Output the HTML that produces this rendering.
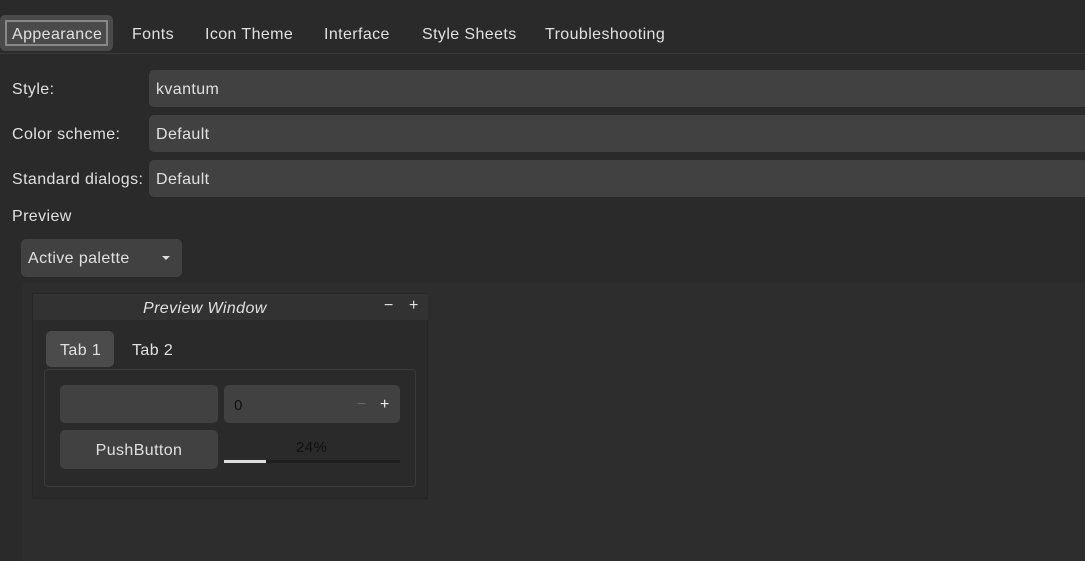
<!DOCTYPE html><html><head><style>
body{margin:0;width:1085px;height:561px;background:#2a2a2a;font-family:"Liberation Sans",sans-serif;color:#e0e0e0;font-size:16px;letter-spacing:0.4px;position:relative;overflow:hidden}
div{position:absolute;box-sizing:border-box}
.in{background:#414141;border-radius:5px;height:37px;left:149px;width:940px;padding:11px 7px}
.l{left:12px}
</style></head><body>
<div style="left:0;top:15px;width:113px;height:36px;background:#4a4a4a;border-radius:5px"></div>
<div style="left:5px;top:20px;width:103px;height:26px;border:2px solid #888"></div>
<div style="left:12px;top:26px">Appearance</div>
<div style="left:132px;top:26px">Fonts</div>
<div style="left:205px;top:26px">Icon Theme</div>
<div style="left:324px;top:26px">Interface</div>
<div style="left:422px;top:26px">Style Sheets</div>
<div style="left:545px;top:26px">Troubleshooting</div>
<div style="left:0;top:53px;width:1085px;height:1px;background:#3a3a3a"></div>
<div class="l" style="top:81px">Style:</div><div class="in" style="top:70px">kvantum</div>
<div class="l" style="top:126px">Color scheme:</div><div class="in" style="top:115px">Default</div>
<div class="l" style="top:171px">Standard dialogs:</div><div class="in" style="top:160px">Default</div>
<div class="l" style="top:208px">Preview</div>
<div style="left:21px;top:239px;width:161px;height:38px;background:#414141;border-radius:5px;padding:11px 7px">Active palette</div>
<div style="left:162px;top:256px;width:0;height:0;border-left:4px solid transparent;border-right:4px solid transparent;border-top:4px solid #ddd"></div>
<div style="left:22px;top:282px;width:1063px;height:279px;background:#2d2d2d"></div>
<div style="left:32px;top:293px;width:396px;height:206px;background:#2a2a2a;border:1px solid #262626"></div>
<div style="left:33px;top:294px;width:395px;height:26px;background:#323232"></div>
<div style="left:143px;top:300px;font-style:italic">Preview Window</div>
<div style="left:384px;top:297px">−</div><div style="left:409px;top:297px">+</div>
<div style="left:46px;top:331px;width:68px;height:36px;background:#4b4b4b;border-radius:5px"></div>
<div style="left:60px;top:342px">Tab 1</div><div style="left:132px;top:342px">Tab 2</div>
<div style="left:44px;top:369px;width:372px;height:118px;border:1px solid #3a3a3a;border-radius:4px"></div>
<div style="left:60px;top:385px;width:158px;height:38px;background:#414141;border-radius:5px"></div>
<div style="left:224px;top:385px;width:176px;height:38px;background:#414141;border-radius:5px"></div>
<div style="left:234px;top:397px;color:#111;font-size:15px">0</div>
<div style="left:357px;top:396px;color:#666">−</div><div style="left:380px;top:396px;color:#eee">+</div>
<div style="left:60px;top:430px;width:158px;height:39px;background:#414141;border-radius:5px;text-align:center;padding-top:12px">PushButton</div>
<div style="left:296px;top:439px;color:#111;font-size:15px">24%</div>
<div style="left:224px;top:460px;width:176px;height:3px;background:#1e1e1e"></div>
<div style="left:224px;top:460px;width:42px;height:3px;background:#ddd"></div>
</body></html>
